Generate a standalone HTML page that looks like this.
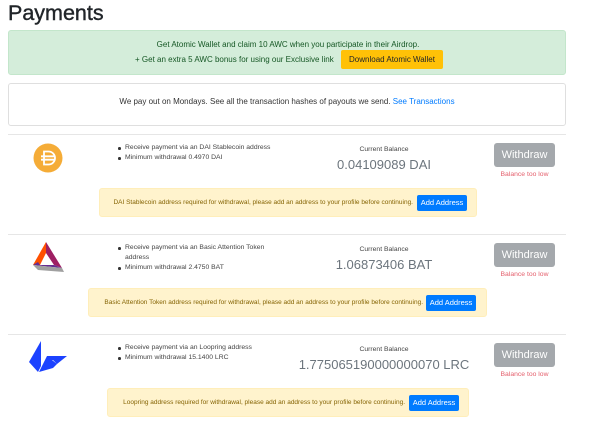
<!DOCTYPE html>
<html><head><style>
body{margin:0;width:600px;height:430px;background:#fff;font-family:"Liberation Sans",sans-serif;position:relative;overflow:hidden;color:#212529}
.a{position:absolute}
.c{text-align:center}
h1{position:absolute;left:8px;top:1px;margin:0;font-size:21.5px;font-weight:normal;color:#212529;-webkit-text-stroke:0.4px #212529}
.green{left:8px;top:30px;width:558px;height:45px;background:#d4edda;border:1px solid #c3e6cb;box-sizing:border-box;border-radius:3px;color:#155724;font-size:8px}
.white{left:8px;top:83px;width:558px;height:43px;border:1px solid #dfdfdf;box-sizing:border-box;border-radius:3px;font-size:8px;color:#333}
.hr{left:8px;width:558px;height:1px;background:#e6e6e6}
.ul{font-size:6.8px;color:#444;line-height:10px}
.ul div{position:relative;padding-left:8px}
.ul div:before{content:"";position:absolute;left:1px;top:4px;width:2.5px;height:2.5px;border-radius:50%;background:#333}
.cb{font-size:6.8px;color:#444;width:120px}
.bal{font-size:13px;color:#6c757d;width:220px}
.wd{width:61px;height:24px;background:#a4a8ac;border-radius:3px;color:#fff;font-size:11px;line-height:24px}
.low{width:61px;font-size:6.8px;color:#e4606d}
.alert{background:#fff3cd;border:1px solid #ffeeba;box-sizing:border-box;border-radius:3px;color:#856404;font-size:6.5px}
.alert span{white-space:nowrap}
.btn{background:#007bff;color:#fff;font-size:7.5px;border-radius:2px;text-align:center;line-height:16px;height:16px}
</style></head><body>
<h1>Payments</h1>
<div class="a green">
<div class="a c" style="left:0;width:558px;top:9px">Get Atomic Wallet and claim 10 AWC when you participate in their Airdrop.</div>
<div class="a" style="left:126px;top:24px">+ Get an extra 5 AWC bonus for using our Exclusive link</div>
<div class="a" style="left:332px;top:19px;width:102px;height:19px;background:#ffc107;border-radius:2px;color:#212529;line-height:19px;text-align:center">Download Atomic Wallet</div>
</div>
<div class="a white"><div class="a c" style="left:0;width:556px;top:13px">We pay out on Mondays. See all the transaction hashes of payouts we send. <span style="color:#007bff">See Transactions</span></div></div>

<div class="a hr" style="top:134px"></div>
<svg class="a" style="left:33px;top:143px" width="30" height="30" viewBox="0 0 30 30"><circle cx="15" cy="15" r="14.5" fill="#f5ac37"/><path d="M11 8.5h4.5a6.5 6.5 0 0 1 0 13H11z M8 13.3h14 M8 16.7h14" fill="none" stroke="#fff" stroke-width="1.8"/></svg>
<div class="a ul" style="left:117px;top:143px"><div>Receive payment via an DAI Stablecoin address</div><div>Minimum withdrawal 0.4970 DAI</div></div>
<div class="a cb c" style="left:324px;top:146px">Current Balance</div>
<div class="a bal c" style="left:274px;top:157px">0.04109089 DAI</div>
<div class="a wd c" style="left:494px;top:143px">Withdraw</div>
<div class="a low c" style="left:494px;top:171px">Balance too low</div>
<div class="a alert" style="left:99px;top:188px;width:378px;height:29px"><span class="a" style="right:63px;top:10px">DAI Stablecoin address required for withdrawal, please add an address to your profile before continuing.</span><div class="a btn" style="left:317px;top:6px;width:50px">Add Address</div></div>

<div class="a hr" style="top:234px"></div>
<svg class="a" style="left:30px;top:240px" width="36" height="34" viewBox="30 240 36 34"><polygon points="46,242 33,265 40,265 46,253" fill="#ff5000"/><polygon points="46,242 62,268 54,265 46,253" fill="#9e1f63"/><polygon points="33,265 62,268 54,265 40,265 38,262" fill="#662d91"/><polygon points="33,265 62,268 64,272 38,270" fill="#a0a0a0"/></svg>
<div class="a ul" style="left:117px;top:243px"><div>Receive payment via an Basic Attention Token<br>address</div><div>Minimum withdrawal 2.4750 BAT</div></div>
<div class="a cb c" style="left:324px;top:246px">Current Balance</div>
<div class="a bal c" style="left:274px;top:257px">1.06873406 BAT</div>
<div class="a wd c" style="left:494px;top:243px">Withdraw</div>
<div class="a low c" style="left:494px;top:271px">Balance too low</div>
<div class="a alert" style="left:88px;top:288px;width:399px;height:29px"><span class="a" style="right:63px;top:10px">Basic Attention Token address required for withdrawal, please add an address to your profile before continuing.</span><div class="a btn" style="left:337px;top:6px;width:50px">Add Address</div></div>

<div class="a hr" style="top:334px"></div>
<svg class="a" style="left:28px;top:340px" width="40" height="34" viewBox="28 340 40 34"><polygon points="41,341 29,362 38,372 41,366" fill="#1c42ff"/><polygon points="47,356 67,356 57,364 53,368 39,372" fill="#1c42ff"/><polygon points="53,360 57,364 52,360" fill="#fff"/></svg>
<div class="a ul" style="left:117px;top:343px"><div>Receive payment via an Loopring address</div><div>Minimum withdrawal 15.1400 LRC</div></div>
<div class="a cb c" style="left:324px;top:346px">Current Balance</div>
<div class="a bal c" style="left:274px;top:357px">1.775065190000000070 LRC</div>
<div class="a wd c" style="left:494px;top:343px">Withdraw</div>
<div class="a low c" style="left:494px;top:371px">Balance too low</div>
<div class="a alert" style="left:107px;top:388px;width:362px;height:29px"><span class="a" style="right:63px;top:10px">Loopring address required for withdrawal, please add an address to your profile before continuing.</span><div class="a btn" style="left:301px;top:6px;width:50px">Add Address</div></div>
</body></html>
